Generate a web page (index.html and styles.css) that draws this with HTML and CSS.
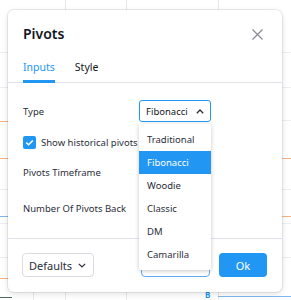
FILE: index.html
```html
<!DOCTYPE html>
<html>
<head>
<meta charset="utf-8">
<title>Pivots</title>
<link rel="stylesheet" href="styles.css">
</head>
<body>
<div class="chart">
  <div class="vl v1"></div>
  <div class="vl v2"></div>
  <div class="vl v3"></div>
  <div class="vl v4"></div>
  <div class="hl h1"></div>
  <div class="hl h2"></div>
  <div class="hl h3"></div>
  <div class="hl h4"></div>
  <div class="hl h5"></div>
  <div class="hl h6"></div>
  <div class="hl orange o1"></div>
  <div class="hl orange o2"></div>
  <div class="hl orange o3"></div>
  <div class="hl orange o4"></div>
  <div class="hl blue b1"></div>
  <div class="hl blue b2"></div>
  <div class="hl green g1"></div>
  <div class="marker">B</div>
</div>

<div class="dialog">
  <div class="header">
    <div class="title">Pivots</div>
    <svg class="close" width="11" height="11" viewBox="0 0 11 11">
      <path d="M0.5 0.5 L10.5 10.5 M10.5 0.5 L0.5 10.5" stroke="#878a94" stroke-width="1.2" fill="none"/>
    </svg>
  </div>
  <div class="tabs">
    <div class="tab active">Inputs</div>
    <div class="tab">Style</div>
  </div>
  <div class="content">
    <div class="row type-row">
      <div class="label">Type</div>
      <div class="select">
        <span>Fibonacci</span>
        <svg width="8" height="5" viewBox="0 0 8 5">
          <path d="M0.8 4.3 L4 1 L7.2 4.3" stroke="#2a2e39" stroke-width="1.3" fill="none"/>
        </svg>
      </div>
    </div>
    <div class="row check-row">
      <span class="checkbox">
        <svg width="13" height="13" viewBox="0 0 13 13">
          <path d="M3.3 6.6 L5.6 8.8 L9.8 4.4" stroke="#ffffff" stroke-width="1.5" fill="none"/>
        </svg>
      </span>
      <span class="check-label">Show historical pivots</span>
    </div>
    <div class="row tf-row">
      <div class="label">Pivots Timeframe</div>
    </div>
    <div class="row back-row">
      <div class="label">Number Of Pivots Back</div>
    </div>
  </div>
  <div class="footer">
    <button class="btn defaults">
      <span>Defaults</span>
      <svg width="8" height="5" viewBox="0 0 8 5">
        <path d="M0.8 0.8 L4 4 L7.2 0.8" stroke="#2a2e39" stroke-width="1.2" fill="none"/>
      </svg>
    </button>
    <div class="spacer"></div>
    <button class="btn cancel" aria-label="Cancel"></button>
    <button class="btn ok">Ok</button>
  </div>

  <div class="menu">
    <div class="item">Traditional</div>
    <div class="item selected">Fibonacci</div>
    <div class="item">Woodie</div>
    <div class="item">Classic</div>
    <div class="item">DM</div>
    <div class="item">Camarilla</div>
  </div>
</div>
</body>
</html>
```

FILE: styles.css
```css
html, body {
  margin: 0;
  padding: 0;
}
body {
  width: 291px;
  height: 300px;
  overflow: hidden;
  position: relative;
  background: #ffffff;
  font-family: "Noto Sans", "Open Sans", sans-serif;
  color: #131722;
}

/* chart canvas behind */
.chart {
  position: absolute;
  left: 0;
  top: 0;
  width: 291px;
  height: 300px;
}
.vl {
  position: absolute;
  top: 0;
  width: 1px;
  height: 300px;
  background: #e6e8ee;
}
.v1 { left: 65px; }
.v2 { left: 126px; }
.v3 { left: 218px; }
.v4 { left: 33px; top: 292px; height: 8px; }
.hl {
  position: absolute;
  left: 0;
  width: 291px;
  height: 1px;
  background: #eceef2;
}
.h1 { top: 52px; }
.h2 { top: 87px; }
.h3 { top: 120px; left: 282px; width: 9px; }
.h4 { top: 189px; }
.h5 { top: 223px; }
.h6 { top: 257px; }
.orange { background: #f4b183; }
.o1 { top: 121px; width: 8px; }
.o2 { top: 158px; }
.o3 { top: 216px; left: 282px; width: 9px; }
.o4 { top: 278px; width: 8px; }
.blue { background: #7fb8f0; }
.b1 { top: 216px; width: 8px; }
.b2 { top: 296px; left: 218px; width: 73px; }
.green { background: #4d6b5e; }
.g1 { top: 297px; width: 12px; }
.marker {
  position: absolute;
  left: 205px;
  top: 291px;
  font-size: 8px;
  line-height: 8px;
  color: #2196f3;
  font-weight: 700;
}

/* dialog */
.dialog {
  position: absolute;
  left: 8px;
  top: 10px;
  width: 274px;
  height: 282px;
  box-sizing: border-box;
  background: #ffffff;
  border-radius: 6px;
  box-shadow: 0 0 0 1px rgba(0, 0, 0, 0.07), 0 2px 6px rgba(0, 0, 0, 0.12);
  display: flex;
  flex-direction: column;
}
.header {
  display: flex;
  align-items: center;
  justify-content: space-between;
  padding: 15px 19px 0 15px;
  height: 18px;
}
.title {
  font-size: 14px;
  line-height: 18px;
  font-weight: 600;
  color: #131722;
}
.close {
  display: block;
}
.tabs {
  display: flex;
  margin-top: 17px;
  padding: 0 15px;
  border-bottom: 1px solid #e0e3eb;
}
.tab {
  font-size: 10.5px;
  line-height: 14px;
  padding-bottom: 6px;
  border-bottom: 3px solid transparent;
  margin-bottom: -1px;
  margin-right: 20px;
  color: #131722;
}
.tab.active {
  color: #2196f3;
  border-bottom-color: #2196f3;
}
.content {
  flex: 1;
  padding: 17px 15px 0 15px;
}
.row {
  display: flex;
  align-items: center;
  height: 22px;
  font-size: 9.5px;
  color: #2a2e39;
}
.type-row {
  display: grid;
  grid-template-columns: 116px 72px;
  align-items: center;
}
.check-row { margin-top: 9px; }
.tf-row { margin-top: 8px; }
.back-row { margin-top: 14px; }
.select {
  box-sizing: border-box;
  height: 22px;
  border: 1px solid #2196f3;
  border-radius: 3px;
  display: flex;
  align-items: center;
  justify-content: space-between;
  padding: 0 6px 0 6px;
  color: #131722;
}
.select svg { display: block; }
.checkbox {
  width: 13px;
  height: 13px;
  border-radius: 2px;
  background: #2196f3;
  display: flex;
  margin-right: 5px;
}
.checkbox svg { display: block; }
.check-label { color: #2a2e39; }

.footer {
  display: flex;
  align-items: center;
  border-top: 1px solid #e0e3eb;
  padding: 14px 15px 15px 14px;
}
.spacer { flex: 1; }
.btn {
  box-sizing: border-box;
  height: 24px;
  border-radius: 4px;
  font-family: "Noto Sans", "Open Sans", sans-serif;
  font-size: 11px;
  margin: 0;
  padding: 0;
  background: #ffffff;
  color: #131722;
}
.defaults {
  width: 72px;
  border: 1px solid #d9dce3;
  display: flex;
  align-items: center;
  justify-content: space-between;
  padding: 0 7px 0 6px;
  color: #2a2e39;
}
.defaults svg { display: block; }
.cancel {
  width: 69px;
  border: 1px solid #5ea9f0;
  margin-right: 9px;
}
.ok {
  width: 48px;
  border: none;
  background: #2196f3;
  color: #ffffff;
}

/* dropdown menu overlay */
.menu {
  position: absolute;
  left: 131px;
  top: 114px;
  width: 72px;
  padding: 4px 0;
  background: #ffffff;
  border-radius: 2px;
  box-shadow: 0 1px 4px rgba(0, 0, 0, 0.22);
}
.item {
  height: 23px;
  line-height: 23px;
  padding-left: 8px;
  font-size: 9.5px;
  color: #2a2e39;
}
.item.selected {
  background: #2196f3;
  color: #ffffff;
}
```
